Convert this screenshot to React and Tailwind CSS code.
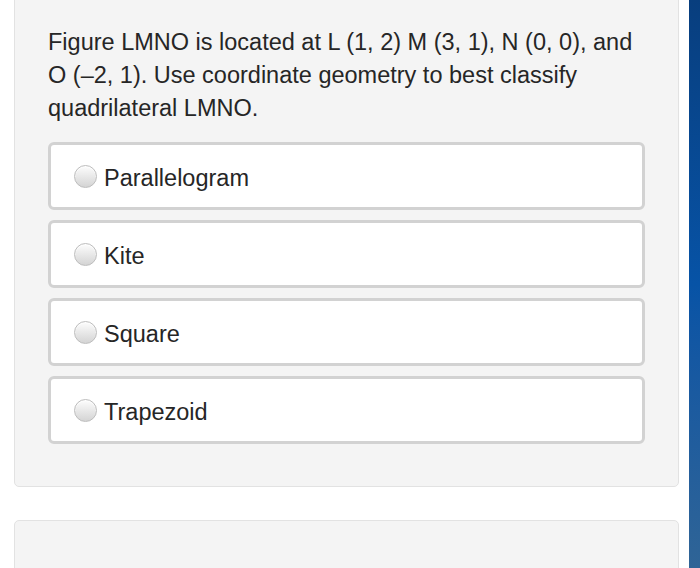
const options = ["Parallelogram", "Kite", "Square", "Trapezoid"];

function Radio() {
  return (
    <span className="w-[23px] h-[23px] shrink-0 rounded-full border border-[#bdbdbd] bg-gradient-to-b from-[#fdfdfd] to-[#d4d4d4] shadow-[inset_0_1px_1px_rgba(255,255,255,0.9)]" />
  );
}

export default function App() {
  return (
    <div
      className="flex min-h-[568px] h-[568px] overflow-hidden bg-white text-[#262626]"
      style={{ fontFamily: '"Liberation Sans", Arial, sans-serif' }}
    >
      <div className="flex-1 pl-[14px] pr-[10px]">
        <div className="mt-[-10px] rounded-[5px] border border-[#e2e2e2] bg-[#f4f4f4] px-[33px] pt-[35px] pb-[42px]">
          <p className="text-[23.5px] leading-[33px]">
            Figure LMNO is located at L (1, 2) M (3, 1), N (0, 0), and O (–2, 1). Use coordinate geometry to best classify quadrilateral LMNO.
          </p>
          <div className="mt-[17px] flex flex-col gap-[10px]">
            {options.map((o) => (
              <div
                key={o}
                className="flex h-[68px] items-center gap-[7px] rounded-[6px] border-[3px] border-[#d2d2d2] bg-white pl-[23px]"
              >
                <Radio />
                <span className="pt-[3px] text-[23.5px] leading-[28px]">{o}</span>
              </div>
            ))}
          </div>
        </div>
        <div className="mt-[33px] h-[80px] rounded-[5px] border border-[#e2e2e2] bg-[#f4f4f4]" />
      </div>
      <div className="w-[11px] bg-gradient-to-b from-[#083e7e] via-[#0753a6] to-[#2f6496]" />
    </div>
  );
}
